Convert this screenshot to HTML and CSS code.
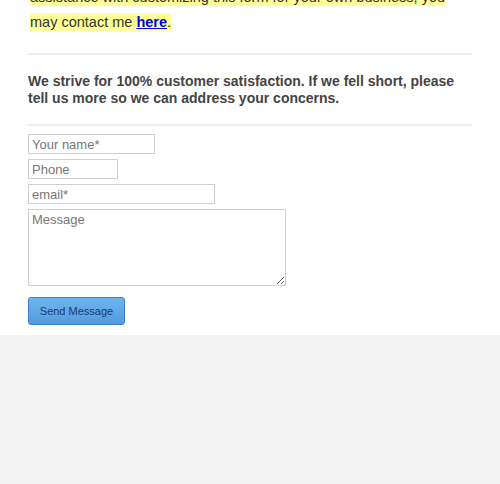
FILE: index.html
```html
<!DOCTYPE html>
<html>
<head>
<meta charset="utf-8">
<link rel="stylesheet" href="styles.css">
</head>
<body>
<div class="card">
  <p class="intro"><span class="hl">assistance with customizing this form for your own business, you<br>may contact me <a href="#">here</a>.</span></p>
  <hr class="rule">
  <h2 class="lead">We strive for 100% customer satisfaction. If we fell short, please tell us more so we can address your concerns.</h2>
  <hr class="rule">
  <form class="form">
    <input class="field name" type="text" placeholder="Your name*">
    <input class="field phone" type="text" placeholder="Phone">
    <input class="field email" type="text" placeholder="email*">
    <textarea class="field msg" placeholder="Message"></textarea>
    <button class="send" type="button">Send Message</button>
  </form>
</div>
</body>
</html>
```
FILE: styles.css
```css
html, body {
  margin: 0;
  padding: 0;
  background: #f3f3f3;
  font-family: "Liberation Sans", Arial, sans-serif;
}
.card {
  background: #fff;
  padding: 0 28px 10px;
  box-shadow: 0 3px 8px rgba(0,0,0,0.09);
}
.intro {
  margin: -15px 0 18px;
  padding-left: 2px;
  font-size: 14.5px;
  line-height: 25px;
  color: #333;
  white-space: nowrap;
}
.hl {
  background: #ffff99;
  padding: 1px 0;
}
.intro a {
  color: #0000ee;
  font-weight: bold;
}
.rule {
  border: 0;
  height: 2px;
  background: #eeeeee;
  margin: 0;
}
.lead {
  margin: 18px 0 17px;
  font-size: 14px;
  line-height: 17px;
  font-weight: bold;
  color: #444;
}
.form {
  display: flex;
  flex-direction: column;
  align-items: flex-start;
  gap: 5px;
  margin-top: 8px;
}
.field {
  box-sizing: border-box;
  border: 1px solid #cfcfcf;
  font-family: "Liberation Sans", Arial, sans-serif;
  font-size: 13px;
  color: #333;
  padding: 2px 3px;
  margin: 0;
  height: 20px;
}
.field::placeholder {
  color: #777;
}
.name { width: 127px; }
.phone { width: 90px; }
.email { width: 187px; }
.msg {
  width: 258px;
  height: 77px;
  resize: both;
  padding: 2px 3px;
}
.send {
  margin-top: 6px;
  width: 97px;
  height: 28px;
  background: linear-gradient(#6eb5ee, #519bdf);
  border: 1px solid #3b7fc7;
  border-radius: 3px;
  color: #1e3c66;
  font-family: "Liberation Sans", Arial, sans-serif;
  font-size: 11px;
  padding: 0;
}
```
